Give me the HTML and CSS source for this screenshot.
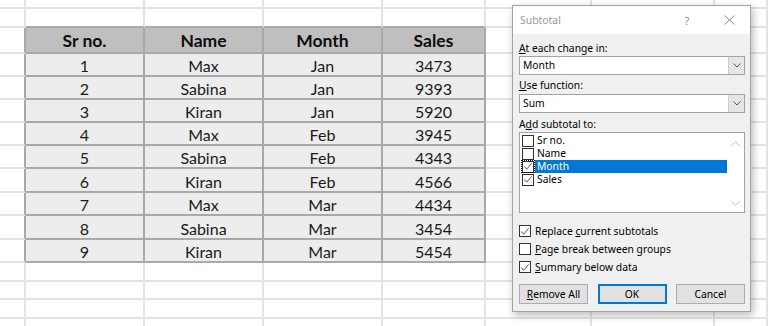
FILE: index.html
```html
<!DOCTYPE html>
<html>
<head>
<meta charset="utf-8">
<link rel="stylesheet" href="styles.css">
</head>
<body>
<div class="sheet">
  <div class="row r0"><div></div><div></div><div></div><div></div><div></div><div></div><div></div><div></div></div>
  <div class="row r1"><div></div><div class="tb"></div><div class="tb"></div><div class="tb"></div><div class="tb"></div><div></div><div></div><div></div></div>
  <div class="row rh"><div class="tl"></div><div class="th">Sr no.</div><div class="th">Name</div><div class="th">Month</div><div class="th">Sales</div><div></div><div></div><div></div></div>
  <div class="row h23"><div class="tl"></div><div class="td">1</div><div class="td">Max</div><div class="td">Jan</div><div class="td">3473</div><div></div><div></div><div></div></div>
  <div class="row h23"><div class="tl"></div><div class="td">2</div><div class="td">Sabina</div><div class="td">Jan</div><div class="td">9393</div><div></div><div></div><div></div></div>
  <div class="row h23"><div class="tl"></div><div class="td">3</div><div class="td">Kiran</div><div class="td">Jan</div><div class="td">5920</div><div></div><div></div><div></div></div>
  <div class="row h23"><div class="tl"></div><div class="td">4</div><div class="td">Max</div><div class="td">Feb</div><div class="td">3945</div><div></div><div></div><div></div></div>
  <div class="row h23"><div class="tl"></div><div class="td">5</div><div class="td">Sabina</div><div class="td">Feb</div><div class="td">4343</div><div></div><div></div><div></div></div>
  <div class="row h24"><div class="tl"></div><div class="td">6</div><div class="td">Kiran</div><div class="td">Feb</div><div class="td">4566</div><div></div><div></div><div></div></div>
  <div class="row h23"><div class="tl"></div><div class="td">7</div><div class="td">Max</div><div class="td">Mar</div><div class="td">4434</div><div></div><div></div><div></div></div>
  <div class="row h24"><div class="tl"></div><div class="td">8</div><div class="td">Sabina</div><div class="td">Mar</div><div class="td">3454</div><div></div><div></div><div></div></div>
  <div class="row h23"><div class="tl"></div><div class="td">9</div><div class="td">Kiran</div><div class="td">Mar</div><div class="td">5454</div><div></div><div></div><div></div></div>
  <div class="row h19"><div></div><div></div><div></div><div></div><div></div><div></div><div></div><div></div></div>
  <div class="row h18"><div></div><div></div><div></div><div></div><div></div><div></div><div></div><div></div></div>
  <div class="row h19"><div></div><div></div><div></div><div></div><div></div><div></div><div></div><div></div></div>
  <div class="row h19"><div></div><div></div><div></div><div></div><div></div><div></div><div></div><div></div></div>

  <div class="dlg">
    <div class="titlebar">
      <span class="title">Subtotal</span>
      <span class="help">?</span>
      <span class="close"><svg width="11" height="10" viewBox="0 0 11 10"><path d="M0.5 0.5 L10.5 9.5 M10.5 0.5 L0.5 9.5" stroke="#8a8a8a" stroke-width="1" fill="none"/></svg></span>
    </div>
    <div class="body">
      <div class="lbl l1"><u>A</u>t each change in:</div>
      <div class="combo"><span class="val">Month</span><span class="arrow"><svg width="8" height="5" viewBox="0 0 8 5"><path d="M0.5 0.5 L4 4 L7.5 0.5" stroke="#555" fill="none"/></svg></span></div>
      <div class="lbl l2"><u>U</u>se function:</div>
      <div class="combo"><span class="val">Sum</span><span class="arrow"><svg width="8" height="5" viewBox="0 0 8 5"><path d="M0.5 0.5 L4 4 L7.5 0.5" stroke="#555" fill="none"/></svg></span></div>
      <div class="lbl l3">A<u>d</u>d subtotal to:</div>
      <div class="list">
        <div class="items">
          <div class="item"><span class="cb"></span><span class="txt">Sr no.</span></div>
          <div class="item"><span class="cb"></span><span class="txt">Name</span></div>
          <div class="item"><span class="cbwrap"><span class="cb"><svg width="11" height="11" viewBox="0 0 11 11"><path d="M1.5 5.5 L4 8.5 L9.5 2" stroke="#555" stroke-width="1.1" fill="none"/></svg></span></span><span class="txt sel">Month</span></div>
          <div class="item"><span class="cb"><svg width="11" height="11" viewBox="0 0 11 11"><path d="M1.5 5.5 L4 8.5 L9.5 2" stroke="#555" stroke-width="1.1" fill="none"/></svg></span><span class="txt">Sales</span></div>
        </div>
        <div class="scroll">
          <svg width="9" height="5" viewBox="0 0 9 5"><path d="M0.5 4.5 L4.5 0.8 L8.5 4.5" stroke="#bcbcbc" fill="none"/></svg>
          <svg width="9" height="5" viewBox="0 0 9 5"><path d="M0.5 0.5 L4.5 4.2 L8.5 0.5" stroke="#bcbcbc" fill="none"/></svg>
        </div>
      </div>
      <div class="opts">
        <div class="opt"><span class="cb2"><svg width="11" height="11" viewBox="0 0 11 11"><path d="M1.5 5.5 L4 8.5 L9.5 2" stroke="#555" stroke-width="1.1" fill="none"/></svg></span><span>Replace <u>c</u>urrent subtotals</span></div>
        <div class="opt"><span class="cb2"></span><span><u>P</u>age break between groups</span></div>
        <div class="opt"><span class="cb2"><svg width="11" height="11" viewBox="0 0 11 11"><path d="M1.5 5.5 L4 8.5 L9.5 2" stroke="#555" stroke-width="1.1" fill="none"/></svg></span><span><u>S</u>ummary below data</span></div>
      </div>
      <div class="btns">
        <div class="btn"><u>R</u>emove All</div>
        <div class="btn ok">OK</div>
        <div class="btn">Cancel</div>
      </div>
    </div>
  </div>
</div>
</body>
</html>
```
FILE: styles.css
```css
html, body {
  margin: 0;
  padding: 0;
  background: #fff;
}
.sheet {
  position: relative;
  width: 768px;
  height: 326px;
  overflow: hidden;
  font-family: Lato, "Liberation Sans", sans-serif;
  font-size: 16px;
  color: #1a1a1a;
}
.row {
  display: flex;
}
.row > div {
  box-sizing: border-box;
  height: 100%;
  border-right: 2px solid #e3e3e3;
  border-bottom: 2px solid #e3e3e3;
  flex: none;
}
.row > div:nth-child(1) { width: 26px; }
.row > div:nth-child(2) { width: 119px; }
.row > div:nth-child(3) { width: 119px; }
.row > div:nth-child(4) { width: 119px; }
.row > div:nth-child(5) { width: 103px; }
.row > div:nth-child(6) { width: 106px; }
.row > div:nth-child(7) { width: 123px; }
.row > div:nth-child(8) { flex: 1; }

.r0 { height: 9px; }
.r1 { height: 19px; }
.rh { height: 26px; }
.h23 { height: 23px; }
.h24 { height: 24px; }
.h19 { height: 19px; }
.h18 { height: 18px; }

.row > .tb { border-bottom-color: #a9a9a9; }
.row > .tl { border-right-color: #a9a9a9; }
.row > .th, .row > .td {
  border-right-color: #a9a9a9;
  border-bottom-color: #a9a9a9;
  display: flex;
  align-items: center;
  justify-content: center;
  padding-top: 2px;
}
.row > .th {
  background: #bfbfbf;
  font-weight: bold;
  font-size: 17.5px;
  color: #0d0d0d;
  padding-top: 1px;
}
.row > .td {
  background: #ededed;
}

/* dialog */
.dlg {
  position: absolute;
  left: 512px;
  top: 5px;
  width: 239px;
  height: 307px;
  box-sizing: border-box;
  border: 1px solid #a3a3a3;
  background: #f0f0f0;
  box-shadow: 2px 3px 8px rgba(0, 0, 0, 0.28);
  font-family: "Noto Sans", "Open Sans", sans-serif;
  font-size: 10.3px;
  color: #000;
}
.titlebar {
  height: 28px;
  background: #fff;
  display: flex;
  align-items: center;
  padding-left: 7px;
}
.title {
  color: #9a9a9a;
  font-size: 10.4px;
}
.help {
  margin-left: auto;
  width: 28px;
  margin-right: 7px;
  text-align: center;
  color: #8a8a8a;
  font-size: 11px;
}
.close {
  width: 42px;
  display: flex;
  justify-content: center;
  align-items: center;
}
.body {
  padding: 0 5px 0 6px;
}
.lbl {
  height: 14px;
  line-height: 14px;
}
.l1 { margin-top: 7px; margin-bottom: 1px; }
.l2 { margin-top: 3px; margin-bottom: 2px; }
.l3 { margin-top: 4px; margin-bottom: 1px; }
.combo {
  height: 19px;
  box-sizing: border-box;
  border: 1px solid #a2a2a2;
  background: #fff;
  display: flex;
  align-items: stretch;
}
.combo .val {
  flex: 1;
  padding-left: 3px;
  line-height: 17px;
}
.arrow {
  width: 15px;
  background: #e6e6e6;
  border-left: 1px solid #cdcdcd;
  display: flex;
  align-items: center;
  justify-content: center;
}
.list {
  height: 81px;
  box-sizing: border-box;
  border: 1px solid #a2a2a2;
  background: #fff;
  display: flex;
}
.items {
  flex: 1;
  padding-top: 1px;
}
.item {
  height: 13px;
  display: flex;
  align-items: center;
}
.cb, .cb2 {
  width: 12px;
  height: 12px;
  box-sizing: border-box;
  border: 1px solid #333;
  background: #fff;
  display: flex;
  align-items: center;
  justify-content: center;
  flex: none;
}
.cb svg, .cb2 svg { display: block; }
.item > .cb { margin-left: 2px; margin-right: 1px; }
.cbwrap {
  margin-left: 1px;
  height: 13px;
  width: 14px;
  box-sizing: border-box;
  outline: 1px dotted #000;
  outline-offset: -1px;
  display: flex;
  align-items: center;
  justify-content: flex-start;
  padding-left: 1px;
}
.txt {
  flex: 1;
  height: 13px;
  line-height: 13px;
  padding-left: 2px;
}
.txt.sel {
  background: #0078d7;
  color: #fff;
}
.scroll {
  width: 17px;
  display: flex;
  flex-direction: column;
  justify-content: space-between;
  align-items: center;
  padding: 8px 0 6px;
}
.scroll svg { display: block; }
.opts {
  margin-top: 9px;
}
.opt {
  height: 18px;
  display: flex;
  align-items: center;
}
.opt .cb2 { margin-right: 4px; }
.btns {
  margin-top: 8px;
  display: flex;
  justify-content: space-between;
}
.btn {
  width: 69px;
  height: 20px;
  box-sizing: border-box;
  border: 1px solid #adadad;
  background: #e1e1e1;
  display: flex;
  align-items: center;
  justify-content: center;
}
.btn.ok {
  border: 2px solid #0078d7;
}
```
